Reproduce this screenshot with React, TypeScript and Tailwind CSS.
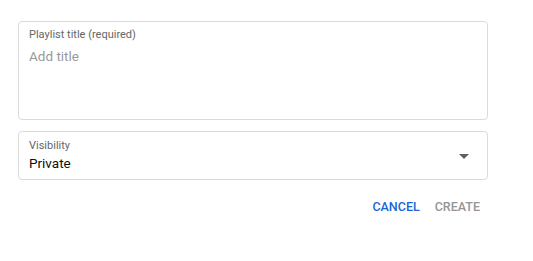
export default function App() {
  return (
    <div className="w-[533px] h-[261px] bg-white pl-[18px] pt-[21px]" style={{ fontFamily: 'Roboto, "Liberation Sans", sans-serif' }}>
      <div className="w-[470px] flex flex-col">
        {/* Title field */}
        <div className="h-[99px] border border-[#dadada] rounded-[4px] px-[10px] pt-[6px]">
          <div className="text-[11px] leading-[14px] text-[#666666]">Playlist title (required)</div>
          <div className="text-[13.5px] leading-[18px] text-[#999999] mt-[5px]">Add title</div>
        </div>

        {/* Visibility select */}
        <div className="mt-[11px] h-[49px] border border-[#dadada] rounded-[4px] pl-[10px] pr-[18px] flex items-center justify-between">
          <div className="flex flex-col">
            <div className="text-[11px] leading-[14px] text-[#666666]">Visibility</div>
            <div className="text-[13.5px] leading-[18px] text-[#0f0f0f] mt-[1px]">Private</div>
          </div>
          <svg width="10" height="5" viewBox="0 0 10 5" className="mt-[1px]">
            <path d="M0 0 L10 0 L5 5 Z" fill="#606060" />
          </svg>
        </div>

        {/* Actions */}
        <div className="flex justify-end gap-[15px] mt-[19px] pr-[8px] text-[12.5px] font-medium leading-[16px]">
          <button className="text-[#1a66d8]">CANCEL</button>
          <button className="text-[#959595]">CREATE</button>
        </div>
      </div>
    </div>
  );
}
